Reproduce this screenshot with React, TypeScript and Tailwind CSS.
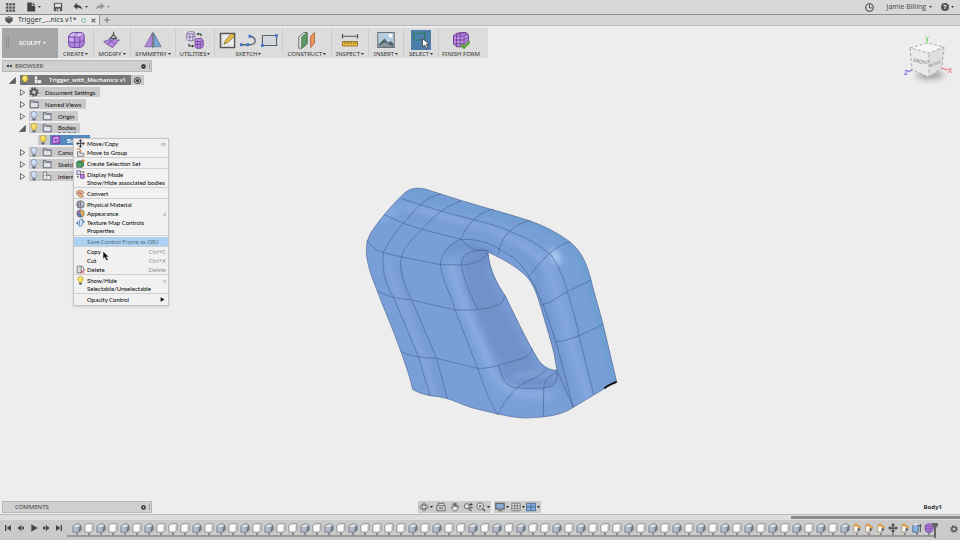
import type { ReactNode } from "react";

type IconProps = { className?: string };

const outline =
  "M173 628C165 590 150 550 137 513C115 450 90 395 66 331C50 290 35 250 34 215C33 180 45 160 60 140C85 105 120 65 150 38C165 25 185 22 210 27L320 62L405 87C440 97 480 108 522 122C570 138 610 160 645 186C680 215 695 250 708 300C720 350 735 395 744 433L785 605C770 608 760 618 750 625L716 645L655 682C620 705 580 712 510 714C460 712 400 695 350 683C310 670 280 650 225 647C200 642 185 636 173 628Z";
const hole =
  "M399 216C440 235 490 262 518 293C540 320 548 350 557 380C572 430 590 490 597 520L606 571C585 571 565 560 552 542C530 510 490 430 452 350C430 318 402 270 399 216Z";

const meshLines = [
  "M138 55C200 75 260 95 320 110S440 140 470 157C520 175 560 200 585 222C610 255 625 290 637 335C650 380 665 425 672 467L716 645",
  "M88 104L150 132L205 149L318 178C370 176 410 192 432 207C470 225 500 250 522 290C545 320 550 350 564 375C580 410 590 450 603 485L655 682",
  "M258 42C220 50 200 68 180 90C150 125 105 170 85 218C80 270 90 310 115 352L190 528L225 647",
  "M320 62C260 82 220 125 200 150C165 185 135 210 137 258C140 300 160 340 170 360L245 535L277 655",
  "M415 87C370 95 330 140 318 178C285 190 258 220 256 255C262 300 290 350 300 390L368 565C385 610 400 660 428 705",
  "M528 122C480 128 435 170 430 222",
  "M645 186C600 195 560 240 522 290",
  "M708 300L637 335C610 350 585 370 557 375",
  "M744 433C700 455 640 485 603 485",
  "M34 180C50 200 70 215 85 218L137 230L256 254L319 255C350 255 395 240 398 216",
  "M66 331C90 345 110 354 170 360L300 390C360 392 400 387 430 375C445 368 448 360 448 345",
  "M137 513C155 525 180 532 245 535L368 565C400 567 430 555 460 547C500 538 528 530 532 505",
  "M318 178C345 200 350 212 375 210L398 212C360 208 320 215 319 255C322 290 345 340 367 388",
  "M430 555C440 590 450 617 475 622C520 627 570 627 590 618C605 607 608 590 606 571",
  "M428 705C450 660 480 620 515 605C550 590 570 575 575 566",
  "M565 710L566 625C568 600 580 590 603 578",
  "M606 571L655 682",
];

function Model() {
  return (
    <svg className="absolute left-[355px] top-[154px] h-[245px] w-[270px]" viewBox="0 0 810 735" fill="none" aria-label="Body1">
      <defs>
        <filter id="soft" x="-20%" y="-20%" width="140%" height="140%">
          <feGaussianBlur stdDeviation="9" />
        </filter>
        <clipPath id="bodyClip">
          <path d={outline + hole} clipRule="evenodd" />
        </clipPath>
      </defs>
      <path d={outline + hole} fillRule="evenodd" fill="#7a9fd8" />
      <g clipPath="url(#bodyClip)">
        <g filter="url(#soft)">
          <path d="M320 225L410 205L460 350L555 540L610 575L600 615L470 605L415 520L345 360Z" fill="#7092c9" />
          <path d="M160 30C260 70 350 90 500 120C600 150 670 190 700 300L785 620" stroke="#6e9dd2" strokeWidth="22" />
          <path d="M75 120C100 90 140 80 210 95C330 135 450 160 520 205C590 250 600 300 640 470L700 660" stroke="#88abe0" strokeWidth="18" />
          <path d="M130 95L320 145C430 165 520 220 560 290" stroke="#7095ce" strokeWidth="12" />
          <path d="M100 230C105 300 150 360 205 530L240 650" stroke="#8aabdf" strokeWidth="12" />
          <path d="M120 240C125 300 170 380 225 530L260 650" stroke="#6f92cb" strokeWidth="8" />
          <path d="M290 245C300 330 350 430 410 570C430 620 470 650 590 645" stroke="#8caee2" strokeWidth="20" />
          <path d="M275 220C300 190 340 190 400 212L350 245" stroke="#6c8fc8" strokeWidth="18" />
          <path d="M435 560C445 610 480 618 590 612" stroke="#6a8cc5" strokeWidth="12" />
          <path d="M470 595C510 580 560 575 600 585" stroke="#87a9dd" strokeWidth="12" />
          <path d="M400 260C440 360 510 490 560 560" stroke="#7a9dd5" strokeWidth="18" />
          <path d="M590 210L612 250" stroke="#b3d0f5" strokeWidth="22" />
          <path d="M540 300C570 390 600 500 640 640" stroke="#6e92cb" strokeWidth="15" />
        </g>
        <path d="M410 88C520 120 600 150 635 188C675 225 690 260 700 310L775 600" stroke="#67a1cb" strokeWidth="3" />
      </g>
      <g stroke="#4a6796" strokeWidth="2">
        {meshLines.map((d) => (
          <path key={d} d={d} />
        ))}
        <path d={outline} />
        <path d={hole} />
      </g>
      <path d="M748 625C760 615 772 612 785 605" stroke="#111" strokeWidth="6" />
    </svg>
  );
}

function Caret({ className = "" }: IconProps) {
  return (
    <svg className={`h-[2px] w-[3px] shrink-0 ${className}`} viewBox="0 0 3 2" fill="currentColor" aria-hidden="true">
      <path d="M0 0h3L1.500 2z" />
    </svg>
  );
}

function Svg({ className = "", box = 24, children }: { className?: string; box?: number; children: ReactNode }) {
  return (
    <svg className={`shrink-0 ${className}`} viewBox={`0 0 ${box} ${box}`} fill="none" aria-hidden="true">
      {children}
    </svg>
  );
}

const Cursor = ({ className = "" }: IconProps) => (
  <Svg className={className}>
    <path d="M5 1v18l4-4 4 8 4-2-4-7h6z" fill="#111" stroke="#eee" strokeWidth="1" />
  </Svg>
);

const Gear = ({ className = "" }: IconProps) => (
  <Svg className={className}>
    <circle cx="12" cy="12" r="9.5" stroke="#555" strokeWidth="4" strokeDasharray="4 3.46" />
    <circle cx="12" cy="12" r="6.5" stroke="#555" strokeWidth="4" />
  </Svg>
);

const Bulb = ({ on = false, className = "size-[10px]" }: { on?: boolean; className?: string }) => (
  <Svg className={className}>
    <path d="M9 17c0-4-4-4-4-9a7 7 0 0114 0c0 5-4 5-4 9z" fill={on ? "#f6dc5a" : "#c8d8f0"} stroke={on ? "#b89b28" : "#8191b8"} strokeWidth="1.8" />
    <path d="M8 18h8v3l-2 2h-4l-2-2z" fill="#666b75" />
    <path d="M9 8c0-2 1-3 3-4" stroke="#fff" strokeWidth="2" />
  </Svg>
);

const Folder = () => (
  <Svg className="size-[10px]">
    <path d="M3 4h7l2 3h10v14H3z" fill="#e0e2e7" stroke="#535966" strokeWidth="2" />
    <path d="M3 8h19" stroke="#535966" strokeWidth="1.5" />
  </Svg>
);

const Parts = () => (
  <Svg className="size-[10px]">
    <path d="M3 2h8v9h10v10H3z" fill="#eee" stroke="#666b75" strokeWidth="2" />
    <path d="M11 11v10M3 11h8" stroke="#8b9098" strokeWidth="1.5" />
  </Svg>
);

const Mesh = ({ className = "size-[10px]" }: IconProps) => (
  <Svg className={className}>
    <path d="M3 6l6-4h9l4 5v10l-6 5H7l-4-4z" fill="#bd8be6" stroke="#683795" strokeWidth="1.8" />
    <path d="M3 8h13l6-3M3 14h13l6-4M7 5v17M12 4v18M16 8v14" stroke="#683795" strokeWidth="1.3" />
  </Svg>
);

// small tile used for a form body in the tree
const FormTile = () => (
  <Svg className="size-[10px]">
    <path d="M2 2h20v20H2z" fill="#8a45b5" />
    <path d="M5 8l4-3h9v10l-4 4H5z" fill="#d9a8f0" />
    <path d="M5 12h9l4-3M10 7v12M14 9v10" stroke="#8a45b5" strokeWidth="2" />
  </Svg>
);

function CreateIcon() {
  return (
    <Svg className="size-[18px]">
      <path d="M2 7Q4 2 9 2h10q4 0 4 5v10q-1 4-5 5H6q-4 0-4-5z" fill="#b083df" stroke="#6b489b" strokeWidth="1.2" />
      <path d="M3 7q2-4 7-4h9q3 0 3 2-2 3-5 3z" fill="#d9bef4" />
      <path d="M3 9h6v5H3z" fill="#cdabf0" />
      <path d="M2 8h15l5-4M17 8v14M10 8v14M2 15h15l6-3M10 8q1-4 5-6" stroke="#6b489b" />
    </Svg>
  );
}

function ModifyIcon() {
  return (
    <Svg className="size-[18px]">
      <path d="M1 14q6 0 10-6 4 5 11 4-4 3-9 10Q7 20 1 14z" fill="#b88be3" stroke="#65429a" />
      <path d="M6 17q5-2 10-8M7 11q4 2 10 7" stroke="#65429a" />
      <path d="M14 1v4m-4 5l4-6 4 6z" stroke="#555" strokeWidth="1.6" fill="#bbb" />
    </Svg>
  );
}

function SymmetryIcon() {
  return (
    <Svg className="size-[18px]">
      <path d="M11 3v18H1z" fill="#b28ad8" stroke="#73579a" />
      <path d="M13 3v18h10z" fill="#7ea6d4" stroke="#4e7299" />
      <path d="M12 1v22" stroke="#666" strokeWidth="1.4" />
    </Svg>
  );
}

function UtilitiesIcon() {
  return (
    <Svg className="size-[18px]">
      <path d="M1 3l3-2h6l2 3v7l-3 2H3l-2-2z" fill="#e6def0" stroke="#705c96" />
      <path d="M1 4h8l3-1M9 4v9M5 4v9M1 8h8l3-1" stroke="#705c96" />
      <path d="M12 12l3-2h6l2 3v8l-3 2h-6l-2-2z" fill="#ba88e3" stroke="#653f91" />
      <path d="M12 14h7l4-1M19 14v9M15 14v9M12 18h7l4-1" stroke="#653f91" />
      <path d="M17 4h3v3M8 20H4v-3" stroke="#333" strokeWidth="1.4" />
      <path d="M17 2v4l-3-2zM8 18v4l3-2z" fill="#333" />
    </Svg>
  );
}

function SketchIcons() {
  return (
    <span className="flex items-center gap-1">
      <Svg className="size-[17px]">
        <path d="M2 2h20v20H2z" fill="#eceef0" stroke="#555" strokeWidth="2" />
        <path d="M4 5v15h16" stroke="#a9b0b5" strokeWidth="1.5" strokeDasharray="2 1" />
        <path d="M7 17l2-5L18 2l4 4L12 15z" fill="#e7bd45" stroke="#7d632b" />
      </Svg>
      <Svg className="size-[17px]">
        <path d="M2 18h11c11 0 11-10 1-12" stroke="#58606b" strokeWidth="1.8" />
        <path d="M0 16h4v4H0zM9 16h4v4H9zM12 4h4v4h-4z" fill="#4a78c4" />
      </Svg>
      <Svg className="size-[17px]">
        <path d="M2 5h20v14H2z" fill="#d4d7de" stroke="#5b6370" strokeWidth="1.6" />
        <path d="M20 3h4v4h-4zM0 17h4v4H0z" fill="#4a78c4" />
      </Svg>
    </span>
  );
}

function ConstructIcon() {
  return (
    <Svg className="size-[18px]">
      <path d="M1 8l7-6h4v15l-7 6H1z" fill="#dde2dd" stroke="#555" />
      <path d="M5 8l7-6v15l-7 6z" fill="#5d9b68" stroke="#39673f" />
      <path d="M17 7l5-5v14l-5 6z" fill="#ec985d" stroke="#a65328" />
    </Svg>
  );
}

function InspectIcon() {
  return (
    <Svg className="size-[18px]">
      <path d="M2 7h20M2 4v6M22 4v6" stroke="#555" strokeWidth="1.6" />
      <path d="M2 14h20v6H2z" fill="#e9b540" stroke="#8b6825" />
      <path d="M5 14v3M8 14v3M11 14v3M14 14v3M17 14v3M20 14v3" stroke="#765c26" />
    </Svg>
  );
}

function InsertIcon() {
  return (
    <Svg className="size-[18px]">
      <path d="M1 2h22v20H1z" fill="#b6cedf" stroke="#6c747a" strokeWidth="1.4" />
      <circle cx="18" cy="6" r="2.5" fill="#fff" />
      <path d="M2 18l8-8 5 6 3-3 4 4v4H2z" fill="#52606a" />
      <path d="M2 20l8-5 12 6H2z" fill="#8a969e" />
    </Svg>
  );
}

function SelectIcon() {
  return (
    <span className="flex size-5 items-center justify-center bg-[#4e7fac]">
      <Svg className="size-[18px]">
        <path d="M2 3h15v9H2z" stroke="#2d7b58" strokeWidth="1.6" />
        <path d="M14 10v11l3-2 2 4 2-1-2-4h4z" fill="#fff" stroke="#333" />
      </Svg>
    </span>
  );
}

function FinishIcon() {
  return (
    <Svg className="size-[18px]">
      <path d="M2 6q5-5 17-4l3 4v10l-6 5H6l-4-4z" fill="#bf92e8" stroke="#65398c" strokeWidth="1.2" />
      <path d="M2 7h14l6-3M2 12h14l6-4M2 17h14l6-6M6 4v17M11 3v18M16 7v14M7 4h12" stroke="#65398c" />
      <path d="M12 18l4 4 8-8" stroke="#61a33c" strokeWidth="3.5" />
    </Svg>
  );
}

const tools = [
  { label: "CREATE", width: "w-[36px]", icon: <CreateIcon /> },
  { label: "MODIFY", width: "w-[37px]", icon: <ModifyIcon /> },
  { label: "SYMMETRY", width: "w-[45px]", icon: <SymmetryIcon /> },
  { label: "UTILITIES", width: "w-[39px]", icon: <UtilitiesIcon /> },
  { label: "SKETCH", width: "w-[68px]", icon: <SketchIcons /> },
  { label: "CONSTRUCT", width: "w-[49px]", icon: <ConstructIcon /> },
  { label: "INSPECT", width: "w-[37px]", icon: <InspectIcon /> },
  { label: "INSERT", width: "w-[35px]", icon: <InsertIcon /> },
  { label: "SELECT", width: "w-[35px]", icon: <SelectIcon /> },
  { label: "FINISH FORM", width: "w-[44px]", icon: <FinishIcon />, plain: true },
];

function Ribbon() {
  return (
    <div className="flex h-[30px] w-fit bg-[#dcdcdc] pr-[5px]">
      <button className="flex w-14 items-center bg-[#a6a6a6] pl-1 text-[6px] font-semibold text-white">
        <span className="h-3 w-[3px] border-x border-[#8f8f8f]" />
        <span className="ml-[10px] mr-[2px]">SCULPT</span>
        <Caret />
      </button>
      {tools.map((t) => (
        <button key={t.label} className={`flex flex-col items-center border-r border-[#cdcdcd] pt-[2px] last:border-r-0 ${t.width}`}>
          <span className="flex h-5 items-center">{t.icon}</span>
          <span className="flex items-center gap-[1px] whitespace-nowrap text-[6px] leading-[8px]">
            {t.label}
            {!t.plain && <Caret />}
          </span>
        </button>
      ))}
    </div>
  );
}

function TopBar() {
  return (
    <header className="flex h-[15px] items-center border-b border-[#8e8e8e] bg-[#d8d8d8] text-[#444]">
      <button className="ml-[5px]" aria-label="Data panel">
        <Svg className="size-[11px]">
          <path d="M2 2h6v6H2zM9 2h6v6H9zM16 2h6v6h-6zM2 9h6v6H2zM9 9h6v6H9zM16 9h6v6h-6zM2 16h6v6H2zM9 16h6v6H9zM16 16h6v6h-6z" fill="#444" stroke="#d8d8d8" strokeWidth="1" />
        </Svg>
      </button>
      <button className="ml-[10px] flex items-center gap-[2px]" aria-label="File">
        <Svg className="size-[10px]">
          <path d="M3 1h11v8h8v14H3zM16 1l6 6h-6z" fill="#444" />
        </Svg>
        <Caret />
      </button>
      <button className="ml-[12px]" aria-label="Save">
        <Svg className="size-[10px]">
          <path d="M2 2h20v20H2z" fill="#555" />
          <path d="M5 4h14v8H5zM7 16h10v5H7z" fill="#ddd" />
          <path d="M9 17h3v4H9z" fill="#555" />
        </Svg>
      </button>
      <button className="ml-[10px] flex items-center gap-[2px]" aria-label="Undo">
        <Svg className="size-[10px]">
          <path d="M1 10l9-8v5c8 0 12 5 13 13-3-5-6-7-13-7v5z" fill="#444" />
        </Svg>
        <Caret />
      </button>
      <button className="ml-[7px] flex items-center gap-[2px] text-[#888]" aria-label="Redo">
        <Svg className="size-[10px]">
          <path d="M23 10l-9-8v5C6 7 2 12 1 20c3-5 6-7 13-7v5z" fill="#999" />
        </Svg>
        <Caret />
      </button>
      <div className="ml-auto flex items-center">
        <button aria-label="Job status">
          <Svg className="size-[9px]">
            <circle cx="12" cy="12" r="10" stroke="#444" strokeWidth="3" />
            <path d="M12 5v8h6" stroke="#444" strokeWidth="2.5" />
          </Svg>
        </button>
        <button className="ml-[13px] flex items-center gap-[3px] whitespace-nowrap font-['Open_Sans','Noto_Sans',sans-serif] text-[7px]">
          Jamie Billing
          <Caret />
        </button>
        <button className="mr-[6px] ml-[9px] flex items-center gap-[2px]" aria-label="Help">
          <span className="flex size-2 items-center justify-center rounded-full bg-[#555] text-[6px] font-bold text-white">?</span>
          <Caret />
        </button>
      </div>
    </header>
  );
}

function TabBar() {
  return (
    <nav className="flex h-[11px] border-b border-[#b8b8b8] bg-[#d6d6d6] text-[7px] leading-[10px]">
      <div className="flex w-[100px] items-center border-r border-[#999] bg-[#e8e8e8] pl-[5px]">
        <Svg className="size-[8px]">
          <path d="M1 5l11-4 11 4v10l-11 8L1 15z" fill="#555" />
          <path d="M1 5l11 4 11-4-11-4z" fill="#888" />
        </Svg>
        <a href="#doc" className="ml-[5px] whitespace-nowrap">Trigger_...nics v1*</a>
        <span className="ml-auto size-[5px] rounded-full border border-[#79c5a0]" />
        <button className="mr-[3px] ml-[5px]" aria-label="Close tab">
          <Svg className="size-[5px]">
            <path d="M3 3l18 18M21 3L3 21" stroke="#555" strokeWidth="5" />
          </Svg>
        </button>
      </div>
      <button className="ml-1 flex items-center" aria-label="New tab">
        <Svg className="size-[6px]">
          <path d="M12 1v22M1 12h22" stroke="#777" strokeWidth="4" />
        </Svg>
      </button>
    </nav>
  );
}

function PanelBar({ title, arrows, plus }: { title: string; arrows?: boolean; plus?: boolean }) {
  return (
    <div className="flex h-3 w-[150px] items-center border border-[#b9b9b9] bg-[#cfcfcf] text-[6px] text-[#444]">
      <button className="flex w-3 justify-center" aria-label={`Collapse ${title}`}>
        {arrows && (
          <Svg className="size-[6px]">
            <path d="M11 6v12L1 12zM23 6v12l-10-6z" fill="#222" />
          </Svg>
        )}
      </button>
      <span>{title}</span>
      <button className="ml-auto" aria-label={`${title} options`}>
        <Svg className="size-[5px]">
          <circle cx="12" cy="12" r="11" fill="#222" />
          <path d={plus ? "M12 6v12M6 12h12" : "M6 12h12"} stroke="#ddd" strokeWidth="3" />
        </Svg>
      </button>
      <span className="ml-[3px] h-[6px] w-[2px] border-l border-[#999]" />
    </div>
  );
}

function Expander({ open, label }: { open?: boolean; label: string }) {
  return (
    <button className="flex w-[9px] justify-center" aria-label={`Toggle ${label}`}>
      <Svg className="size-[7px]">
        {open ? <path d="M22 2v20H2z" fill="#666" stroke="#333" strokeWidth="2" /> : <path d="M5 2l15 10L5 22z" fill="#eee" stroke="#444" strokeWidth="2.5" />}
      </Svg>
    </button>
  );
}

const branches = [
  { label: "Document Settings", icon: <Gear className="size-[10px]" />, width: "w-[71px]" },
  { label: "Named Views", icon: <Folder />, width: "w-[57px]" },
  { label: "Origin", icon: <Folder />, bulb: true, width: "w-[49px]" },
  { label: "Bodies", icon: <Folder />, bulb: true, on: true, open: true, width: "w-[51px]" },
  { label: "Canvases", icon: <Folder />, bulb: true, width: "w-[60px]" },
  { label: "Sketches", icon: <Folder />, bulb: true, width: "w-[60px]" },
  { label: "Internals", icon: <Parts />, bulb: true, width: "w-[60px]" },
];

function BrowserTree() {
  return (
    <ul className="pt-[2px] font-['Lato','Noto_Sans',sans-serif] text-[6px] font-medium whitespace-nowrap text-[#222]">
      <li className="flex h-3 items-center pl-[6px]">
        <Expander open label="Trigger_with_Mechanics v1" />
        <div className="ml-[3px] flex h-[10px] items-center bg-[#c8c8c8] font-['Open_Sans','Noto_Sans',sans-serif]">
          <span className="flex h-[10px] items-center bg-[#777] pr-[5px] font-semibold text-white">
            <Bulb on />
            <span className="ml-[3px] mr-[6px]"><Parts /></span>
            Trigger_with_Mechanics v1
          </span>
          <input type="radio" name="active" defaultChecked aria-label="Activate component" className="mx-[3px] size-[7px] appearance-none rounded-full border border-[#333] bg-[#333] bg-clip-content p-[1px]" />
        </div>
      </li>
      {branches.map((b) => (
        <li key={b.label}>
          <div className="flex h-3 items-center pl-4">
            <Expander open={b.open} label={b.label} />
            <div className={`ml-[2px] flex h-[10px] items-center bg-[#c9c9c9] ${b.width}`}>
              {b.bulb && <span className="mr-[3px]"><Bulb on={b.on} /></span>}
              {b.icon}
              <span className={`ml-[6px] ${b.open ? "border-b border-dashed border-[#7890b0] leading-[8px]" : ""}`}>{b.label}</span>
            </div>
          </div>
          {b.open && (
            <div className="flex h-3 items-center pl-9">
              <span className="flex h-[10px] items-center bg-[#c9c9c9]">
                <Bulb on />
                <span className="ml-[2px] flex h-[10px] w-10 items-center gap-[6px] bg-[#5588bd] pl-[1px] font-bold text-white">
                  <FormTile />
                  Body1
                </span>
              </span>
            </div>
          )}
        </li>
      ))}
    </ul>
  );
}

const Move = ({ className = "size-[9px]" }: IconProps) => (
  <Svg className={className}>
    <path d="M12 4v16M4 12h16" stroke="#444" strokeWidth="3" />
    <path d="M12 0l5 6H7zM12 24l5-6H7zM0 12l6-5v10zM24 12l-6-5v10z" fill="#444" />
  </Svg>
);

const MoveGroup = () => (
  <Svg className="size-[9px]">
    <path d="M4 10h7v4h10v8H4z" fill="#e4e4e4" stroke="#666" strokeWidth="2" />
    <path d="M3 3c7-3 10 2 10 7" stroke="#d0753e" strokeWidth="3" />
  </Svg>
);

const SelectionSet = () => (
  <Svg className="size-[9px]">
    <path d="M2 9l4-4h14v13l-4 4H2z" fill="#57a76c" stroke="#2c6340" strokeWidth="2" />
    <path d="M2 9h14v13M16 9l4-4" stroke="#2c6340" strokeWidth="1.5" />
    <path d="M19 0v9M15 4h9" stroke="#e0893f" strokeWidth="2.5" />
  </Svg>
);

const Display = () => (
  <Svg className="size-[9px]">
    <path d="M2 2h10v10H2z" fill="#ddd5ec" stroke="#70558e" strokeWidth="2" />
    <path d="M12 12h10v10H12z" fill="#b985df" stroke="#653c88" strokeWidth="2" />
    <path d="M15 5h6v4M8 19H4v-4" stroke="#333" strokeWidth="2" />
  </Svg>
);

const Convert = () => (
  <Svg className="size-[9px]">
    <path d="M2 7l9-4 11 6-7 5 5 6-8 2-9-7z" fill="#f1b680" stroke="#a06d48" strokeWidth="2" />
    <path d="M6 10l9 3" stroke="#9566b1" strokeWidth="3" />
  </Svg>
);

const Material = () => (
  <Svg className="size-[9px]">
    <circle cx="12" cy="12" r="10" fill="#a5a9b3" stroke="#555b68" strokeWidth="2" />
    <path d="M6 5v14M12 3v18" stroke="#6a7386" strokeWidth="2" />
    <path d="M14 5q6 2 5 9" stroke="#eee" strokeWidth="2" />
  </Svg>
);

const Appearance = () => (
  <Svg className="size-[9px]">
    <circle cx="12" cy="12" r="10" fill="#e0a94a" />
    <path d="M12 12V2a10 10 0 00-9 14z" fill="#8c6bb7" />
    <path d="M12 12l-9 4a10 10 0 0014 5z" fill="#5078b8" />
    <circle cx="12" cy="12" r="10" stroke="#666" strokeWidth="1.500" />
  </Svg>
);

const Texture = () => (
  <Svg className="size-[9px]">
    <path d="M9 6l8-4v17l-8 4z" fill="#dce8f8" stroke="#4779b4" strokeWidth="2" />
    <path d="M6 8l-6 6 6 5M19 5l5 5-5 4" fill="#4d79ad" />
  </Svg>
);

const DeleteIcon = () => (
  <Svg className="size-[9px]">
    <path d="M3 3h8l3 4v14H3zM11 3h6l4 5v9" fill="#ddd" stroke="#666" strokeWidth="2" />
    <path d="M12 13l10 10M22 13L12 23" stroke="#c34a45" strokeWidth="2.500" />
  </Svg>
);

type Item = { label: string; hint?: string; icon?: ReactNode; hot?: boolean; sub?: boolean };

const menu: Item[][] = [
  [{ label: "Move/Copy", hint: "m", icon: <Move /> }, { label: "Move to Group", icon: <MoveGroup /> }],
  [{ label: "Create Selection Set", icon: <SelectionSet /> }],
  [{ label: "Display Mode", icon: <Display /> }, { label: "Show/Hide associated bodies" }],
  [{ label: "Convert", icon: <Convert /> }],
  [
    { label: "Physical Material", icon: <Material /> },
    { label: "Appearance", hint: "a", icon: <Appearance /> },
    { label: "Texture Map Controls", icon: <Texture /> },
    { label: "Properties" },
  ],
  [{ label: "Save Control Frame as OBJ", hot: true }],
  [
    { label: "Copy", hint: "Ctrl+C" },
    { label: "Cut", hint: "Ctrl+X" },
    { label: "Delete", hint: "Delete", icon: <DeleteIcon /> },
  ],
  [{ label: "Show/Hide", hint: "v", icon: <Bulb on className="size-[9px]" /> }, { label: "Selectable/Unselectable" }],
  [{ label: "Opacity Control", sub: true }],
];

const groupGrow = ["", "flex-1", "flex-2", "flex-3", "flex-4"];

function ContextMenu() {
  return (
    <div role="menu" className="absolute top-[112px] left-[73px] flex h-[168px] w-24 flex-col border border-[#c4c4c4] bg-[#f1f1f1] pb-[1px] font-['Lato','Noto_Sans',sans-serif] text-[6px] leading-[8px] font-medium whitespace-nowrap text-[#111] shadow">
      {menu.map((group, i) => (
        <div key={group[0].label} className={`flex flex-col ${i > 0 ? "border-t border-[#d0d0d0] pt-[1px]" : ""} ${groupGrow[group.length]}`}>
          {group.map((item) => (
            <button key={item.label} role="menuitem" className={`flex flex-1 items-center pr-[2px] text-left ${item.hot ? "bg-[#acd0f2] text-[#5c7690]" : ""}`}>
              <span className="flex w-[13px] shrink-0 items-center pl-[2px]">{item.icon}</span>
              {item.label}
              <span className="ml-auto text-[#999]">{item.hint}</span>
              {item.sub && (
                <Svg className="mr-[1px] size-[5px]">
                  <path d="M3 1l19 11L3 23z" fill="#111" />
                </Svg>
              )}
            </button>
          ))}
        </div>
      ))}
    </div>
  );
}

function ViewCube() {
  return (
    <svg className="absolute top-[5px] right-[4px] h-[54px] w-[54px]" viewBox="0 0 54 54" fill="none" aria-label="View cube">
      <defs>
        <filter id="cubeShadow" x="-50%" y="-100%" width="200%" height="300%">
          <feGaussianBlur stdDeviation="3" />
        </filter>
      </defs>
      <ellipse cx="28" cy="44" rx="14" ry="4" fill="#999" filter="url(#cubeShadow)" />
      <path d="M25 7v10" stroke="#9ce49c" strokeWidth="2" />
      <path d="M6 41l6-3" stroke="#5e5ed8" />
      <path d="M39 37l7 2" stroke="#e66" />
      <path d="M8 17l17-5 17 4-15 6z" fill="#f6f6f6" />
      <path d="M8 17l19 5v24L10 39z" fill="#eaeaea" />
      <path d="M27 22l15-6-2 21-13 9z" fill="#dfdfdf" />
      <path d="M8 17l17-5 17 4-15 6zM8 17l2 22 17 7V22M42 16l-2 21-13 9" stroke="#aaa" strokeDasharray="3 2" />
      <g fontFamily="Noto Sans, sans-serif">
        <text x="11" y="31" fill="#777" transform="rotate(10 11 31)" fontSize="5">FRONT</text>
        <text x="28" y="36" fill="#777" transform="rotate(-19 28 36)" fontSize="4">RIGHT</text>
        <text x="23" y="10" fill="#6ed66e" fontSize="7">Y</text>
        <text x="2" y="44" fill="#4646dd" fontSize="7">Z</text>
        <text x="46" y="42" fill="#e05555" fontSize="7">X</text>
      </g>
    </svg>
  );
}

function NavButton({ label, caret, children }: { label: string; caret?: boolean; children: ReactNode }) {
  return (
    <button className="flex items-center gap-[1px]" aria-label={label}>
      <Svg className="size-[10px]">{children}</Svg>
      {caret && <Caret />}
    </button>
  );
}

function NavBar() {
  return (
    <div className="flex gap-[3px] text-[#222]">
      <div className="flex h-3 w-[73px] items-center justify-between bg-[#cbcbcb] px-[1px]">
        <NavButton label="Orbit" caret>
          <ellipse cx="12" cy="12" rx="10" ry="5" stroke="#666" strokeWidth="2" />
          <ellipse cx="12" cy="12" rx="4" ry="10" stroke="#666" strokeWidth="2" />
          <path d="M9 10h6v4H9z" fill="#eee" />
        </NavButton>
        <NavButton label="Look at">
          <path d="M5 8V3h14v5M2 9h20v12H2z" fill="#ddd" stroke="#555" strokeWidth="2" />
          <path d="M7 13h10v4H7z" fill="#777" />
        </NavButton>
        <NavButton label="Pan">
          <path d="M7 14V5q2-2 3 0v6V3q2-2 3 0v8-7q2-2 3 0v9l2-4q3-1 3 2l-5 10H9l-6-7q0-3 4 0z" fill="#eee" stroke="#555" strokeWidth="1.8" />
        </NavButton>
        <NavButton label="Zoom">
          <circle cx="9" cy="10" r="6" fill="#e5e5e5" stroke="#555" strokeWidth="2" />
          <path d="M13 15l7 7M19 2v8M15 6h8M16 14h7" stroke="#444" strokeWidth="2.500" />
        </NavButton>
        <NavButton label="Fit" caret>
          <circle cx="10" cy="10" r="8" fill="#eee" stroke="#555" strokeWidth="2" />
          <path d="M7 7h6v6H7z" fill="#777" />
          <path d="M16 16l6 6" stroke="#444" strokeWidth="3" />
        </NavButton>
      </div>
      <div className="flex h-3 w-[47px] items-center justify-between bg-[#cbcbcb] px-[1px]">
        <NavButton label="Display settings" caret>
          <path d="M2 3h20v14H2zM8 21h10" fill="#85aad4" stroke="#555" strokeWidth="2.500" />
        </NavButton>
        <NavButton label="Grid" caret>
          <path d="M2 3h20v18H2zM9 3v18M15 3v18M2 9h20M2 15h20" fill="#e8e8e8" stroke="#666" strokeWidth="1.800" />
        </NavButton>
        <NavButton label="Viewports" caret>
          <path d="M1 3h22v18H1zM12 3v18M1 12h22" fill="#83aee0" stroke="#42658d" strokeWidth="2" />
        </NavButton>
      </div>
    </div>
  );
}

// e extrude, s sketch, f fillet, m move, x offset, p form
const features =
  "esesesessseses" +
  "esessesesesssse" +
  "sessesesesseses" +
  "ssesesesesesese" +
  "seses" +
  "e" +
  "fffmfxp";

function Feature({ kind }: { kind: string }) {
  if (kind === "m") return <Move className="size-[10px]" />;
  if (kind === "p") return <Mesh />;
  if (kind === "f")
    return (
      <Svg className="size-[10px]">
        <path d="M4 22V8q2-6 6-6l12 9-8 2v8z" fill="#f7f3ed" stroke="#8d7960" strokeWidth="1.500" />
        <path d="M3 8q3-7 9-5l10 8-7 1q-1-5-6-4z" fill="#e79a38" />
        <path d="M14 13l7 1-6 7z" fill="#555" />
      </Svg>
    );
  if (kind === "x")
    return (
      <Svg className="size-[10px]">
        <path d="M2 5h13v17H2z" fill="#8db2df" stroke="#416489" strokeWidth="2" />
        <path d="M6 2h9l-4 4H2z" fill="#eee" />
        <path d="M20 22V4m-3 4l3-4 3 4" stroke="#333" strokeWidth="2" />
      </Svg>
    );
  if (kind === "e")
    return (
      <Svg className="size-[10px]">
        <path d="M2 22V8q5-7 13-6 6 1 7 6v9l-5 5z" fill="#b2bac8" stroke="#737984" strokeWidth="1.800" />
        <path d="M16 22V9l6-3v11z" fill="#71798a" />
        <path d="M3 9q6-6 13-5l3 2-3 3z" fill="#e3e7ee" />
      </Svg>
    );
  return (
    <Svg className="size-[10px]">
      <path d="M2 22V6l5-4h15v15l-5 5z" fill="#fafafa" stroke="#777" strokeWidth="1.800" />
      <path d="M18 21V7l4-4v14z" fill="#b5b5b5" />
    </Svg>
  );
}

const playback = [
  { label: "Go to start", d: "M3 3h4v18H3zM21 3v18L8 12z" },
  { label: "Step back", d: "M13 3v18L1 12zM15 8h6v8h-6z" },
  { label: "Play", d: "M4 1l19 11L4 23z" },
  { label: "Step forward", d: "M11 3v18l12-9zM3 8h6v8H3z" },
  { label: "Go to end", d: "M17 3h4v18h-4zM3 3v18l13-9z" },
];

function Timeline() {
  return (
    <footer className="border-t border-[#bbb] bg-[#cacaca]">
      <div className="flex h-[5px] items-center bg-[#dedede]">
        <span className="ml-auto h-[3px] w-[169px] bg-[#8b8b8b]" />
      </div>
      <div className="flex h-5 pt-[3px] pl-1">
        <div className="flex w-[61px] justify-between pr-[2px]">
          {playback.map((p) => (
            <button key={p.label} aria-label={p.label} className="flex h-[9px] items-center">
              <Svg className="size-[8px]">
                <path d={p.d} fill="#444" />
              </Svg>
            </button>
          ))}
        </div>
        <div className="ml-[2px] flex h-[14px] border-b-2 border-[#999] pl-1">
          {features.split("").map((kind, i) => (
            <button key={i} aria-label={`Feature ${i + 1}`} className="flex w-3 flex-col items-center">
              <Feature kind={kind} />
              <span className="h-[2px] w-[2px] bg-[#888]" />
            </button>
          ))}
        </div>
        <div className="-ml-[3px] h-[15px]">
          <svg className="h-[15px] w-[6px]" viewBox="0 0 6 15" aria-hidden="true">
            <path d="M0 0h6v3L4 5v10H2V5L0 3z" fill="#666" />
          </svg>
        </div>
        <button className="mr-[2px] ml-auto flex h-[11px] items-center" aria-label="Timeline settings">
          <Gear className="size-[8px]" />
        </button>
      </div>
    </footer>
  );
}

export default function App() {
  return (
    <div className="flex min-h-screen flex-col overflow-hidden bg-[#ededed] font-['Noto_Sans','Open_Sans',sans-serif] text-[#333]">
      <TopBar />
      <TabBar />
      <main className="relative flex flex-1 flex-col pt-[2px] pl-[2px]">
        <Model />
        <ViewCube />
        <Ribbon />
        <div className="mt-[2px]">
          <PanelBar title="BROWSER" arrows />
          <BrowserTree />
        </div>
        <ContextMenu />
        <Cursor className="absolute top-[225px] left-[101px] size-[10px]" />
        <div className="mt-auto mb-[1px] grid grid-cols-[1fr_auto_1fr] items-center pr-[3px]">
          <PanelBar title="COMMENTS" plus />
          <NavBar />
          <span className="pr-[15px] text-right text-[6px] font-bold">Body1</span>
        </div>
      </main>
      <Timeline />
    </div>
  );
}
